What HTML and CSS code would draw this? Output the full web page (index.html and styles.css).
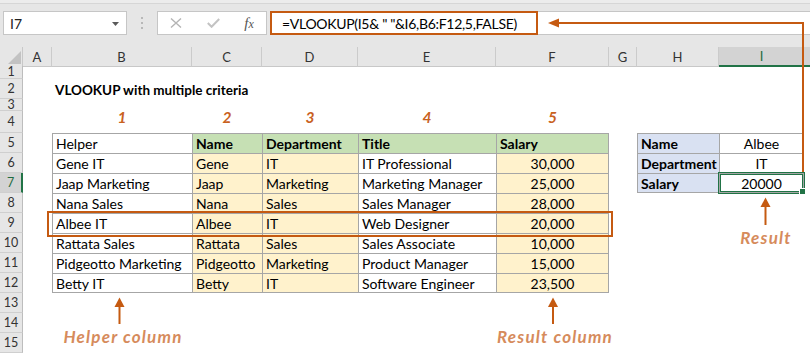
FILE: index.html
```html
<!DOCTYPE html>
<html>
<head>
<meta charset="utf-8">
<link rel="stylesheet" href="styles.css">
</head>
<body>
<div class="app">
  <div class="topstrip"></div>
  <div class="toolbar">
    <div class="namebox"><span>I7</span><svg class="caret" width="7" height="4" viewBox="0 0 7 4"><polygon points="0,0 7,0 3.5,4" fill="#5a5a5a"/></svg></div>
    <div class="sep"><svg width="2" height="12" viewBox="0 0 2 12"><rect x="0" y="0" width="2" height="2" fill="#b8b8b8"/><rect x="0" y="5" width="2" height="2" fill="#b8b8b8"/><rect x="0" y="10" width="2" height="2" fill="#b8b8b8"/></svg></div>
    <div class="fxbox">
      <svg width="12" height="10" viewBox="0 0 12 10"><path d="M1 0.5 L11 9.5 M11 0.5 L1 9.5" stroke="#b5b5b5" stroke-width="1.4" fill="none"/></svg>
      <svg width="13" height="10" viewBox="0 0 13 10"><path d="M0.8 5 L4.6 8.8 L12.2 1" stroke="#c3c3c3" stroke-width="2" fill="none"/></svg>
      <span class="fx">f<span class="fxx">x</span></span>
    </div>
    <div class="formula"><div class="ftext">=VLOOKUP(I5&amp; " "&amp;I6,B6:F12,5,FALSE)</div></div>
  </div>

  <div class="sheet">
    <div class="row hdr">
      <div class="corner"><svg width="23" height="19" viewBox="0 0 23 19"><polygon points="21,4 21,17 8,17" fill="#c2c2c2"/></svg></div>
      <div class="ch">A</div><div class="ch">B</div><div class="ch">C</div><div class="ch">D</div><div class="ch">E</div><div class="ch">F</div><div class="ch">G</div><div class="ch">H</div><div class="ch sel">I</div><div class="ch sel"></div>
    </div>
    <div class="row h13"><div class="rh">1</div></div>
    <div class="row"><div class="rh">2</div><div class="c"></div><div class="c title">VLOOKUP with multiple criteria</div></div>
    <div class="row h12"><div class="rh">3</div></div>
    <div class="row h22 nums"><div class="rh">4</div><div class="c"></div><div class="c n">1</div><div class="c n">2</div><div class="c n">3</div><div class="c n">4</div><div class="c n">5</div></div>
    <div class="row"><div class="rh">5</div><div class="c"></div>
      <div class="c t">Helper</div><div class="c t g">Name</div><div class="c t g">Department</div><div class="c t g">Title</div><div class="c t g r">Salary</div>
      <div class="c"></div><div class="c t l">Name</div><div class="c t r ctr">Albee</div></div>
    <div class="row"><div class="rh">6</div><div class="c"></div>
      <div class="c t">Gene IT</div><div class="c t o">Gene</div><div class="c t o">IT</div><div class="c t">IT Professional</div><div class="c t o r ctr">30,000</div>
      <div class="c"></div><div class="c t l">Department</div><div class="c t r ctr">IT</div></div>
    <div class="row"><div class="rh selr">7</div><div class="c"></div>
      <div class="c t">Jaap Marketing</div><div class="c t o">Jaap</div><div class="c t o">Marketing</div><div class="c t">Marketing Manager</div><div class="c t o r ctr">25,000</div>
      <div class="c"></div><div class="c t l btm">Salary</div><div class="c t r btm ctr active">20000</div></div>
    <div class="row"><div class="rh">8</div><div class="c"></div>
      <div class="c t">Nana Sales</div><div class="c t o">Nana</div><div class="c t o">Sales</div><div class="c t">Sales Manager</div><div class="c t o r ctr">28,000</div></div>
    <div class="row"><div class="rh">9</div><div class="c"></div>
      <div class="c t">Albee IT</div><div class="c t o">Albee</div><div class="c t o">IT</div><div class="c t">Web Designer</div><div class="c t o r ctr">20,000</div></div>
    <div class="row"><div class="rh">10</div><div class="c"></div>
      <div class="c t">Rattata Sales</div><div class="c t o">Rattata</div><div class="c t o">Sales</div><div class="c t">Sales Associate</div><div class="c t o r ctr">10,000</div></div>
    <div class="row"><div class="rh">11</div><div class="c"></div>
      <div class="c t">Pidgeotto Marketing</div><div class="c t o">Pidgeotto</div><div class="c t o">Marketing</div><div class="c t">Product Manager</div><div class="c t o r ctr">15,000</div></div>
    <div class="row"><div class="rh">12</div><div class="c"></div>
      <div class="c t btm">Betty IT</div><div class="c t o btm">Betty</div><div class="c t o btm">IT</div><div class="c t btm">Software Engineer</div><div class="c t o r btm ctr">23,500</div></div>
    <div class="row"><div class="rh">13</div></div>
    <div class="row"><div class="rh">14</div></div>
    <div class="row"><div class="rh">15</div></div>
  </div>

  <svg class="marks" width="810" height="354" viewBox="0 0 810 354">
    <g fill="#c55a11" stroke="#c55a11" stroke-width="2">
      <line x1="556" y1="23" x2="804" y2="23"/>
      <line x1="803" y1="22" x2="803" y2="172"/>
      <polygon points="548,23 559,18.5 559,27.5" stroke="none"/>
      <line x1="765.5" y1="206" x2="765.5" y2="225"/>
      <polygon points="765.5,197.5 760.5,207 770.5,207" stroke="none"/>
      <line x1="119.5" y1="306" x2="119.5" y2="324"/>
      <polygon points="119.5,297.5 114.5,307 124.5,307" stroke="none"/>
      <line x1="553" y1="306" x2="553" y2="324"/>
      <polygon points="553,297.5 548,307 558,307" stroke="none"/>
      <rect x="48" y="212" width="564" height="24" fill="none"/>
    </g>
  </svg>
  <div class="label lb-result">Result</div>
  <div class="label lb-helper">Helper column</div>
  <div class="label lb-rcol">Result column</div>
</div>
</body>
</html>
```

FILE: styles.css
```css
* { box-sizing: border-box; }
html, body { margin: 0; padding: 0; background: #fff; }
body { font-family: Lato, "Open Sans", sans-serif; color: #000; }
.app { position: relative; width: 810px; height: 354px; overflow: hidden; }

.topstrip { height: 4px; background: #ececec; border-bottom: 1px solid #d6d6d6; }
.toolbar {
  height: 43px; background: #e6e6e6; display: flex; align-items: flex-start;
  padding-top: 7px;
}
.namebox {
  margin-left: 3px; width: 124px; height: 24px; background: #fff;
  border: 1px solid #c6c6c6; display: flex; align-items: center;
  justify-content: space-between; padding: 0 7px 0 6px;
  font-size: 14px; color: #222;
}
.caret { margin-top: 1px; }
.sep { width: 30px; height: 24px; display: flex; align-items: center; justify-content: center; }
.fxbox {
  width: 110px; height: 24px; background: #fff; border: 1px solid #c6c6c6;
  display: flex; align-items: center; justify-content: space-around;
}
.fx { font-family: "Liberation Serif", serif; font-style: italic; font-size: 15px; color: #555; line-height: 1; }
.fxx { font-size: 12px; }
.formula {
  margin-left: 3px; flex: 1; height: 24px; background: #fff;
  border-top: 1px solid #c6c6c6; border-bottom: 1px solid #c6c6c6;
}
.ftext {
  margin: -1px 0 0 0; width: 268px; height: 24px; border: 2px solid #c55a11;
  display: flex; align-items: center; padding-left: 10px; font-size: 14px;
  letter-spacing: -0.3px; white-space: nowrap;
}

.sheet { display: flex; flex-direction: column; }
.row {
  display: grid;
  grid-template-columns: 23px 29px 140px 70px 96px 138px 113px 28px 82px 85px 1fr;
  height: 20px;
}
.row.hdr { height: 19px; }
.row.h13 { height: 13px; }
.row.h12 { height: 12px; }
.row.h22 { height: 22px; }

.corner { background: #e6e6e6; border-right: 1px solid #c8c8c8; border-bottom: 1px solid #c8c8c8; }
.corner svg { display: block; }
.ch {
  background: #e6e6e6; border-right: 1px solid #cbcbcb; border-bottom: 1px solid #c8c8c8;
  display: flex; align-items: center; justify-content: center;
  font-size: 13px; color: #333;
}
.ch.sel { background: #d3d3d3; border-bottom: 2px solid #217346; color: #1f6b40; border-right: none; }

.rh {
  background: #e6e6e6; border-right: 1px solid #bdbdbd; border-bottom: 1px solid #cfcfcf;
  display: flex; align-items: center; justify-content: center;
  font-size: 12.5px; color: #333; line-height: 10px;
}
.rh.selr { background: #d3d3d3; border-right: 2px solid #217346; color: #1f6b40; }

.c {
  display: flex; align-items: center; padding: 0 3px; white-space: nowrap;
  font-size: 14px; overflow: visible; min-width: 0;
}
.title { font-weight: 700; font-size: 13.5px; padding-top: 1px; }
.t { border-top: 1px solid #a6a6a6; border-left: 1px solid #a6a6a6; }
.r { border-right: 1px solid #a6a6a6; }
.btm { border-bottom: 1px solid #a6a6a6; }
.g { background: #c6e0b4; font-weight: 700; }
.o { background: #fff2cc; }
.l { background: #d9e1f2; font-weight: 700; }
.ctr { justify-content: center; }
.active { position: relative; z-index: 2; box-shadow: 0 0 0 1px #217346, inset 0 0 0 1px #217346; }
.active::after {
  content: ""; position: absolute; right: -3px; bottom: -3px; width: 5px; height: 5px;
  background: #217346; border: 1px solid #fff;
}

.nums .n {
  justify-content: center; align-items: flex-start; padding-top: 1px;
  font-weight: 700; font-style: italic; font-size: 15.5px; line-height: 10px; color: #c9621f;
}

.marks { position: absolute; left: 0; top: 0; pointer-events: none; z-index: 5; }
.label {
  position: absolute; transform: translateX(-50%); white-space: nowrap;
  font-weight: 700; font-style: italic; font-size: 17px; line-height: 20px;
  color: #d68b5c; letter-spacing: 1.2px; z-index: 5;
}
.lb-result { left: 766px; top: 228px; }
.lb-helper { left: 123px; top: 327px; }
.lb-rcol { left: 555px; top: 327px; }
```
